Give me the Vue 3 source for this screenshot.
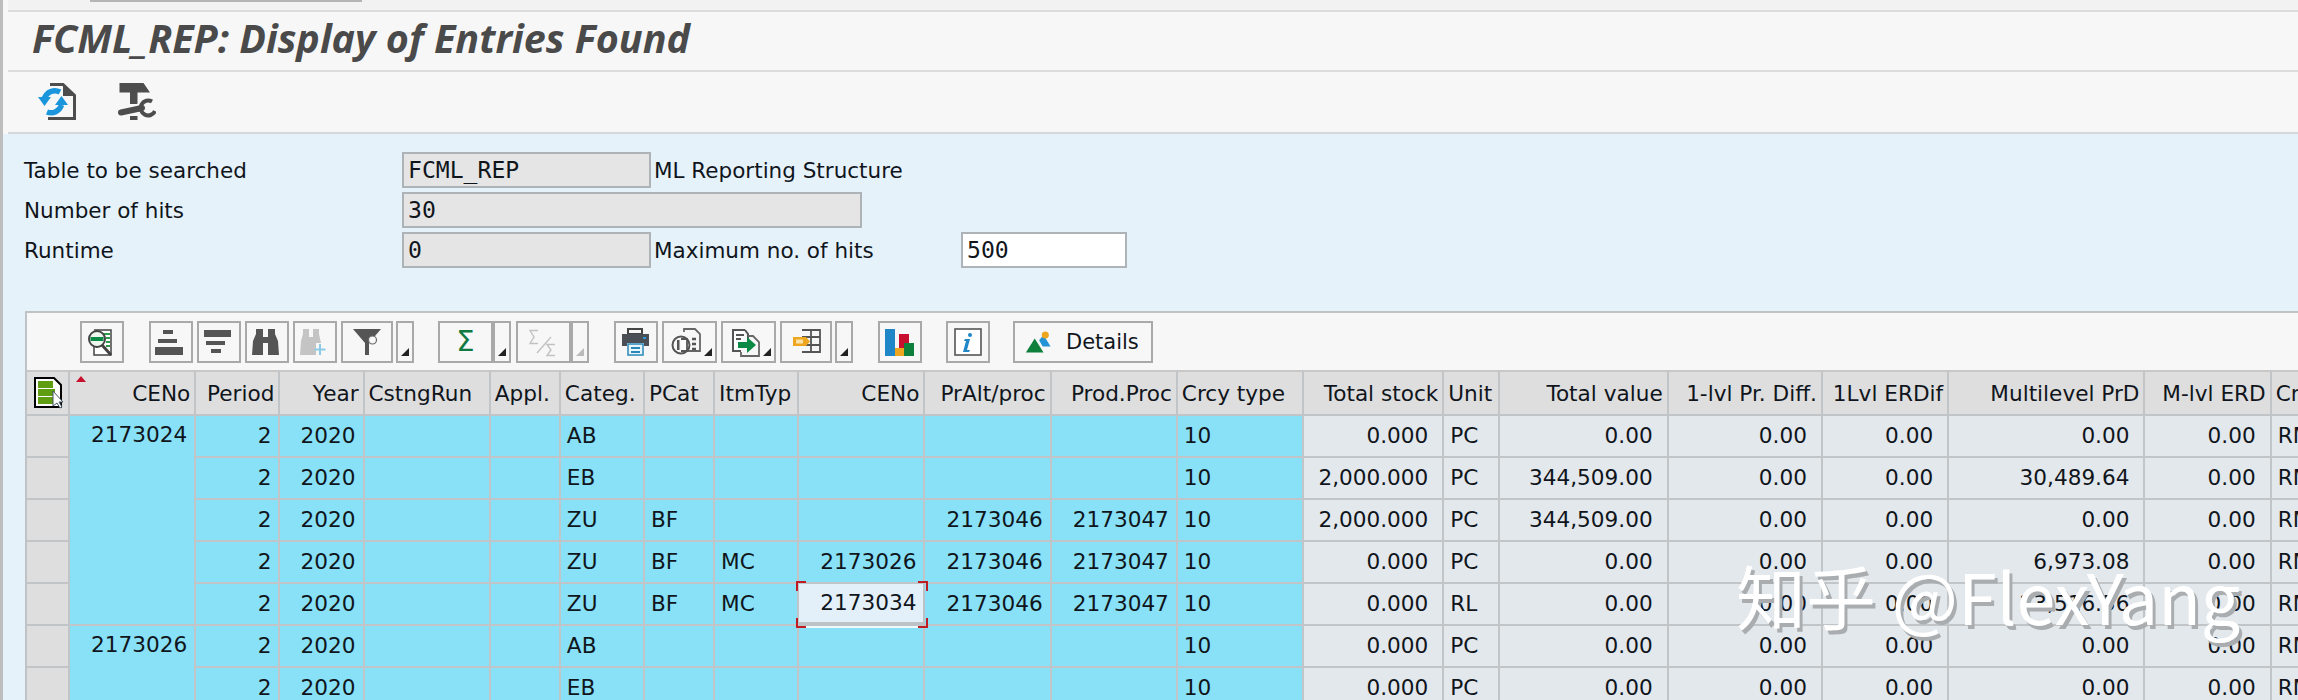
<script setup>
const columns = [
  { label: 'CENo', width: 126, align: 'r', key: 'sorted' },
  { label: 'Period', width: 84, align: 'r' },
  { label: 'Year', width: 84, align: 'r' },
  { label: 'CstngRun', width: 126, align: 'l' },
  { label: 'Appl.', width: 70, align: 'l' },
  { label: 'Categ.', width: 84, align: 'l' },
  { label: 'PCat', width: 70, align: 'l' },
  { label: 'ItmTyp', width: 84, align: 'l' },
  { label: 'CENo', width: 126, align: 'r' },
  { label: 'PrAlt/proc', width: 126, align: 'r' },
  { label: 'Prod.Proc', width: 126, align: 'r' },
  { label: 'Crcy type', width: 126, align: 'l' },
  { label: 'Total stock', width: 140, align: 'r' },
  { label: 'Unit', width: 56, align: 'l' },
  { label: 'Total value', width: 168, align: 'r' },
  { label: '1-lvl Pr. Diff.', width: 154, align: 'r' },
  { label: '1Lvl ERDif', width: 126, align: 'r' },
  { label: 'Multilevel PrD', width: 196, align: 'r' },
  { label: 'M-lvl ERD', width: 126, align: 'r' },
  { label: 'Crcy', width: 70, align: 'l' },
]
const rows = [
  { head: '2173024', span: 5, c: ['AB', '', '', '', '', ''], s: '0.000', u: 'PC', v: '0.00', m: '0.00' },
  { c: ['EB', '', '', '', '', ''], s: '2,000.000', u: 'PC', v: '344,509.00', m: '30,489.64' },
  { c: ['ZU', 'BF', '', '', '2173046', '2173047'], s: '2,000.000', u: 'PC', v: '344,509.00', m: '0.00' },
  { c: ['ZU', 'BF', 'MC', '2173026', '2173046', '2173047'], s: '0.000', u: 'PC', v: '0.00', m: '6,973.08' },
  { c: ['ZU', 'BF', 'MC', '2173034', '2173046', '2173047'], s: '0.000', u: 'RL', v: '0.00', m: '23,516.56', focus: true },
  { head: '2173026', span: 2, c: ['AB', '', '', '', '', ''], s: '0.000', u: 'PC', v: '0.00', m: '0.00' },
  { c: ['EB', '', '', '', '', ''], s: '0.000', u: 'PC', v: '0.00', m: '0.00' },
]
</script>

<template>
  <div class="page">
    <div class="topbar"><span class="tab-edge"></span></div>
    <h1 class="title">FCML_REP: Display of Entries Found</h1>
    <div class="apptools">
      <svg class="appicon" viewBox="0 0 38 38">
        <path d="M12 1.500h13l11.500 11v23H10" fill="#f7f7f7" stroke="#4d4d4d" stroke-width="3"/>
        <path d="M25 1l12 12H25z" fill="#4d4d4d"/>
        <path d="M22 9a11 11 0 0 0-15.500 6" fill="none" stroke="#1b96dc" stroke-width="5.500"/>
        <path d="M0 14h13l-6.500 9z" fill="#1b96dc"/>
        <path d="M9 29a11 11 0 0 0 14.500-7" fill="none" stroke="#1b96dc" stroke-width="5.500"/>
        <path d="M17 22h13l-6.500-9z" fill="#1b96dc"/>
      </svg>
      <svg class="appicon second" viewBox="0 0 38 38">
        <path d="M1.500 0h24l6.500 9.500H19.500V21H12V9.500H1.500z" fill="#4d4d4d"/>
        <rect x="12" y="33" width="7.500" height="4" fill="#4d4d4d"/>
        <path d="M3 29.500L24 25" stroke="#f7f7f7" stroke-width="10" stroke-linecap="round"/>
        <path d="M3 29.500L24 25" stroke="#4d4d4d" stroke-width="6" stroke-linecap="round"/>
        <path d="M34 18.500A7.500 7.500 0 1 0 37 28" fill="none" stroke="#4d4d4d" stroke-width="4"/>
      </svg>
    </div>

    <section class="panel">
      <div class="form-row">
        <label class="form-label">Table to be searched</label>
        <span class="field short">FCML_REP</span>
        <span class="after">ML Reporting Structure</span>
      </div>
      <div class="form-row">
        <label class="form-label">Number of hits</label>
        <span class="field long">30</span>
      </div>
      <div class="form-row">
        <label class="form-label">Runtime</label>
        <span class="field short">0</span>
        <span class="after maxlabel">Maximum no. of hits</span>
        <span class="field input">500</span>
      </div>

      <div class="grid-box">
        <div class="grid-tools">
          <button class="btn"><svg viewBox="0 0 30 30"><path d="M7 3h17v25H7v-8" fill="#fff" stroke="#444" stroke-width="1.500"/><path d="M16 7h7M19 11h4M19 15h4M19 19h4" stroke="#2e9a4a" stroke-width="2"/><circle cx="10" cy="12" r="8" fill="#eef7ee" stroke="#444" stroke-width="2"/><rect x="3.500" y="10" width="13" height="4" fill="#0a8a45"/><path d="M15 18l9 10" stroke="#444" stroke-width="3"/></svg></button>
          <span class="group">
            <button class="btn"><svg viewBox="0 0 30 30"><rect x="7" y="3" width="10" height="4" fill="#555"/><rect x="2" y="12" width="19" height="4" fill="#555"/><rect x="-1" y="20" width="28" height="8" fill="#555"/></svg></button>
            <button class="btn"><svg viewBox="0 0 30 30"><rect x="0" y="3" width="27" height="7" fill="#555"/><rect x="2" y="14" width="19" height="4" fill="#555"/><rect x="7" y="22" width="10" height="4" fill="#555"/></svg></button>
            <button class="btn"><svg viewBox="0 0 30 30"><path d="M4 2h7v8h5V2h7v5l3 7 1 14H16V16h-5v12H0l1-14 3-7z" fill="#555"/></svg></button>
            <button class="btn"><svg viewBox="0 0 30 30"><path d="M3 2h6v8h4V2h6v5l2 9h-5v12H0l1-14 2-7z" fill="#c4c4c4"/><path d="M20 17v11M14.500 22.500h11" stroke="#8ccbe8" stroke-width="2"/></svg></button>
            <span class="split">
              <button class="btn wide"><svg viewBox="0 0 30 30"><path d="M1 2h28L17 16v12h-4V16z" fill="#555"/><circle cx="20.500" cy="13" r="4" fill="#f7f7f7" stroke="#666" stroke-width="1.200"/></svg></button>
              <button class="btn arrow"></button>
            </span>
          </span>
          <span class="split sum">
            <button class="btn wide"><span class="sigma">Σ</span></button>
            <button class="btn arrow"></button>
          </span>
          <span class="split near sumoff">
            <button class="btn wide"><svg viewBox="0 0 30 30"><path d="M9 3.500H1l4 6.500-4 6.500h8M26 17.500h-8l4 5.500-4 5.500h8M8 26l14-16" stroke="#c2c2c2" stroke-width="1.400" fill="none"/></svg></button>
            <button class="btn arrow off"></button>
          </span>
          <span class="group">
            <button class="btn"><svg viewBox="0 0 30 30"><rect x="7" y="2" width="14" height="5" fill="#f7f7f7" stroke="#444" stroke-width="2"/><path d="M1 7h27v12h-5v-3H6v3H1z" fill="#4a4f55"/><rect x="22" y="10" width="3" height="2" fill="#2a9ad8"/><rect x="7" y="17" width="15" height="11" fill="#e8f5fb" stroke="#2a88b8" stroke-width="1.500"/><path d="M10 21h9M10 25h9" stroke="#2a88b8" stroke-width="2"/></svg></button>
            <button class="btn view"><svg viewBox="0 0 36 30"><path d="M14 5V2h11l5 5v17H16" fill="#f7f7f7" stroke="#666" stroke-width="1.800"/><circle cx="11" cy="18" r="8.500" fill="#f7f7f7" stroke="#555" stroke-width="2"/><rect x="7" y="13" width="2.500" height="10" fill="#555"/><path d="M11 12h6v12h-6" fill="#fff" stroke="#555" stroke-width="1.800"/><path d="M22 12h4M22 17h4M22 22h4" stroke="#555" stroke-width="2.400"/></svg><i class="corner"></i></button>
            <button class="btn view"><svg viewBox="0 0 36 30"><path d="M16 3H4v21h8" fill="#fff" stroke="#555" stroke-width="2"/><path d="M16 3l3 4v5" fill="none" stroke="#555" stroke-width="2"/><path d="M7 8h8M7 12h5" stroke="#555" stroke-width="1.800"/><path d="M19 9h5l6 6v14H12v-4" fill="none" stroke="#666" stroke-width="1.800"/><path d="M9 15h9v-5l9 8-9 8v-5H9z" fill="#0a8a45"/></svg><i class="corner"></i></button>
            <span class="split">
              <button class="btn layout"><svg viewBox="0 0 34 30"><path d="M13 3h18v22H13M22 3v22M13 10h18M13 18h18" fill="none" stroke="#555" stroke-width="1.800"/><path d="M4 10h13l4 4.500-4 4.500H4z" fill="#eda61d"/><rect x="7" y="12.500" width="7" height="4" fill="#fbe3a8"/></svg></button>
              <button class="btn arrow"></button>
            </span>
          </span>
          <button class="btn"><svg viewBox="0 0 30 30"><rect x="0" y="2" width="10" height="27" fill="#1f86c8"/><rect x="14" y="7" width="10" height="14" fill="#c8102e"/><rect x="19" y="16" width="10" height="13" fill="#0f7f3c"/><rect x="10" y="21" width="9" height="8" fill="#eda61d"/></svg></button>
          <button class="btn info"><svg viewBox="0 0 30 30"><rect x="2" y="2" width="26" height="26" fill="#fff" stroke="#555" stroke-width="1.600"/><circle cx="17" cy="8" r="2" fill="#1f86c8"/><path d="M12 12h5l-3 11h3l-1 2h-6l3-11h-2z" fill="#1f86c8"/></svg></button>
          <button class="btn details">
            <svg viewBox="0 0 34 26"><path d="M1 25L11 9l10 16z" fill="#0f7f3c"/><path d="M16 11l5-6 8 13H20z" fill="#2393d6"/><circle cx="23" cy="5" r="4" fill="#eda61d"/></svg>
            <span>Details</span>
          </button>
        </div>

        <table class="grid">
          <colgroup>
            <col class="rowhead-col">
            <col v-for="(col, i) in columns" :key="i" :style="{ width: col.width + 'px' }">
          </colgroup>
          <thead>
            <tr>
              <th class="rowhead corner-head">
                <svg class="layout-icon" viewBox="0 0 30 32"><path d="M1 1h19l7 7v22H1z" fill="#fff" stroke="#000" stroke-width="2"/><path d="M4 4h15v7H4zM4 12h17v7H4zM4 20h17v7H4z" fill="#5f9e12"/><path d="M19 14v15l4-3 3 5 2-1-3-5h4z" fill="#fff" stroke="#456" stroke-width="1"/></svg>
              </th>
              <th v-for="(col, i) in columns" :key="i" :class="col.align">
                <i v-if="col.key" class="sort-mark"></i>{{ col.label }}
              </th>
            </tr>
          </thead>
          <tbody>
            <tr v-for="(row, i) in rows" :key="i">
              <td class="rowhead"></td>
              <td v-if="row.head" :rowspan="row.span" class="key r top">{{ row.head }}</td>
              <td class="key r">2</td>
              <td class="key r">2020</td>
              <td class="key"></td>
              <td class="key"></td>
              <td class="key">{{ row.c[0] }}</td>
              <td class="key">{{ row.c[1] }}</td>
              <td class="key">{{ row.c[2] }}</td>
              <td class="key r" :class="{ focus: row.focus }">
                {{ row.c[3] }}
                <template v-if="row.focus"><i class="mark tl"></i><i class="mark tr"></i><i class="mark bl"></i><i class="mark br"></i></template>
              </td>
              <td class="key r">{{ row.c[4] }}</td>
              <td class="key r">{{ row.c[5] }}</td>
              <td class="key">10</td>
              <td class="r val">{{ row.s }}</td>
              <td>{{ row.u }}</td>
              <td class="r val">{{ row.v }}</td>
              <td class="r val">0.00</td>
              <td class="r val">0.00</td>
              <td class="r val">{{ row.m }}</td>
              <td class="r val">0.00</td>
              <td>RMB</td>
            </tr>
          </tbody>
        </table>
      </div>
    </section>
    <div class="watermark">知乎 @FlexYang</div>
  </div>
</template>

<style>
html, body { margin: 0; background: #f4f4f4; }
</style>

<style scoped>
.page {
  position: relative;
  width: 2298px;
  height: 700px;
  overflow: hidden;
  box-sizing: border-box;
  border-left: 3px solid #bdbdbd;
  background: #f7f7f7;
  font-family: "DejaVu Sans", sans-serif;
  color: #10151c;
}
.topbar {
  height: 10px;
  margin-left: 5px;
  border-bottom: 2px solid #dcdcdc;
  background: #f2f2f2;
}
.tab-edge {
  display: block;
  width: 272px;
  height: 2px;
  margin-left: 82px;
  background: #b5b5b5;
}
.title {
  margin: 0 0 0 5px;
  height: 58px;
  padding-left: 24px;
  border-bottom: 2px solid #dcdcdc;
  font: italic 700 39.500px/52px "Open Sans", sans-serif;
  color: #4a4a4a;
  white-space: nowrap;
}
.apptools {
  display: flex;
  align-items: center;
  height: 60px;
  margin-left: 5px;
  padding-left: 30px;
  border-bottom: 2px solid #d4d8db;
}
.appicon { width: 38px; height: 38px; }
.appicon.second { margin-left: 42px; }
.panel {
  height: 566px;
  box-sizing: border-box;
  padding-top: 18px;
  background: #e6f2f9;
}
.form-row {
  display: flex;
  align-items: center;
  height: 36px;
  margin-bottom: 4px;
  font-size: 21.500px;
  padding-left: 21px;
}
.form-label { width: 378px; }
.field {
  box-sizing: border-box;
  height: 36px;
  padding-left: 4px;
  border: 2px solid #adb3b7;
  background: #e5e5e5;
  font: 23.100px/32px "DejaVu Sans Mono", monospace;
}
.field.short { width: 249px; }
.field.long { width: 460px; }
.field.input { width: 166px; background: #fff; }
.after { margin-left: 3px; }
.maxlabel { width: 304px; flex: none; margin-right: 3px; }

.grid-box {
  margin: 43px 0 0 22px;
  border-top: 2px solid #bfc3c5;
  border-left: 2px solid #bfc3c5;
  background: #f7f7f7;
  overflow: hidden;
}
.grid-tools {
  display: flex;
  align-items: center;
  height: 57px;
  padding-left: 53px;
  gap: 25px;
}
.group { display: flex; gap: 4px; }
.split { display: flex; gap: 3px; }
.split.sum { margin-left: -1px; gap: 0; }
.split.sumoff { gap: 0; }
.split.sum .btn.wide, .split.sumoff .btn.wide { width: 55px; }
.split.near { margin-left: -20px; }
.btn {
  display: flex;
  align-items: center;
  justify-content: center;
  position: relative;
  box-sizing: border-box;
  width: 44px;
  height: 42px;
  padding: 0;
  border: 2px solid #a9a9a9;
  background: #f7f7f7;
  font-family: "DejaVu Sans", sans-serif;
}
.btn svg { width: 30px; height: 30px; overflow: visible; flex: none; }
.btn.wide { width: 52px; }
.btn.view { width: 55px; padding-right: 4px; }
.btn.view svg { width: 36px; }
.btn.layout { width: 52px; }
.btn.layout svg { width: 34px; }
.btn.arrow { width: 18px; }
.btn.arrow::after, .corner {
  content: "";
  position: absolute;
  right: 3px;
  bottom: 5px;
  border-style: solid;
  border-width: 0 0 8px 8px;
  border-color: transparent transparent #222 transparent;
}
.btn.arrow.off::after { border-bottom-color: #bbb; }
.sigma { font-size: 29px; line-height: 1; color: #0e7a40; }
.btn.info { margin-left: -1px; }
.btn.details {
  width: 140px;
  margin-left: -2px;
  justify-content: flex-start;
  gap: 11px;
  padding-left: 10px;
  font-size: 21px;
  color: #10151c;
}
.btn.details svg { width: 30px; height: 26px; }

.grid {
  table-layout: fixed;
  width: 2315px;
  border-collapse: separate;
  border-spacing: 0;
  font-size: 21.600px;
}
.rowhead-col { width: 43px; }
th, td {
  box-sizing: border-box;
  padding: 0 7px 2px 6px;
  border-right: 2px solid #c1c5c7;
  border-bottom: 2px solid #c1c5c7;
  white-space: nowrap;
  overflow: hidden;
  text-align: left;
  font-weight: 400;
}
th {
  position: relative;
  height: 46px;
  padding: 0 4px 0 4px;
  background: #dedede;
  border-top: 2px solid #c8c8c8;
}
td { height: 42px; background: #e3e8ec; }
td.val { padding-right: 14px; }
.r { text-align: right; }
.l { text-align: left; }
td.rowhead, th.rowhead { background: #dedede; padding: 0; }
td.key { background: #88e1f6; }
td.top { vertical-align: top; padding-top: 6px; }
.corner-head { text-align: center; }
.layout-icon { display: block; width: 30px; height: 32px; margin: 0 0 0 7px; }
.sort-mark {
  position: absolute;
  left: 6px;
  top: 4px;
  border-style: solid;
  border-width: 0 5px 6px 5px;
  border-color: transparent transparent #c8102e transparent;
}
td.key.focus {
  position: relative;
  overflow: visible;
  background: #e4f0f9;
  border-right-color: #bcc2c6;
  border-bottom: 4px solid #bcc2c6;
  box-shadow: 0 2px 0 #f2f7fa;
}
.mark {
  position: absolute;
  width: 8px;
  height: 8px;
  border: 0 solid #c01b22;
}
.mark.tl { left: -3px; top: -3px; border-width: 2px 0 0 2px; }
.mark.tr { right: -5px; top: -3px; border-width: 2px 2px 0 0; }
.mark.bl { left: -3px; bottom: -6px; border-width: 0 0 2px 2px; }
.mark.br { right: -5px; bottom: -6px; border-width: 0 2px 2px 0; }
.watermark {
  position: absolute;
  left: 1733px;
  top: 553px;
  font: 400 70px/84px "Noto Sans CJK SC", "Noto Sans", sans-serif;
  color: #fff;
  text-shadow: 3px 4px 0 #a9adb0;
  white-space: nowrap;
}
</style>
